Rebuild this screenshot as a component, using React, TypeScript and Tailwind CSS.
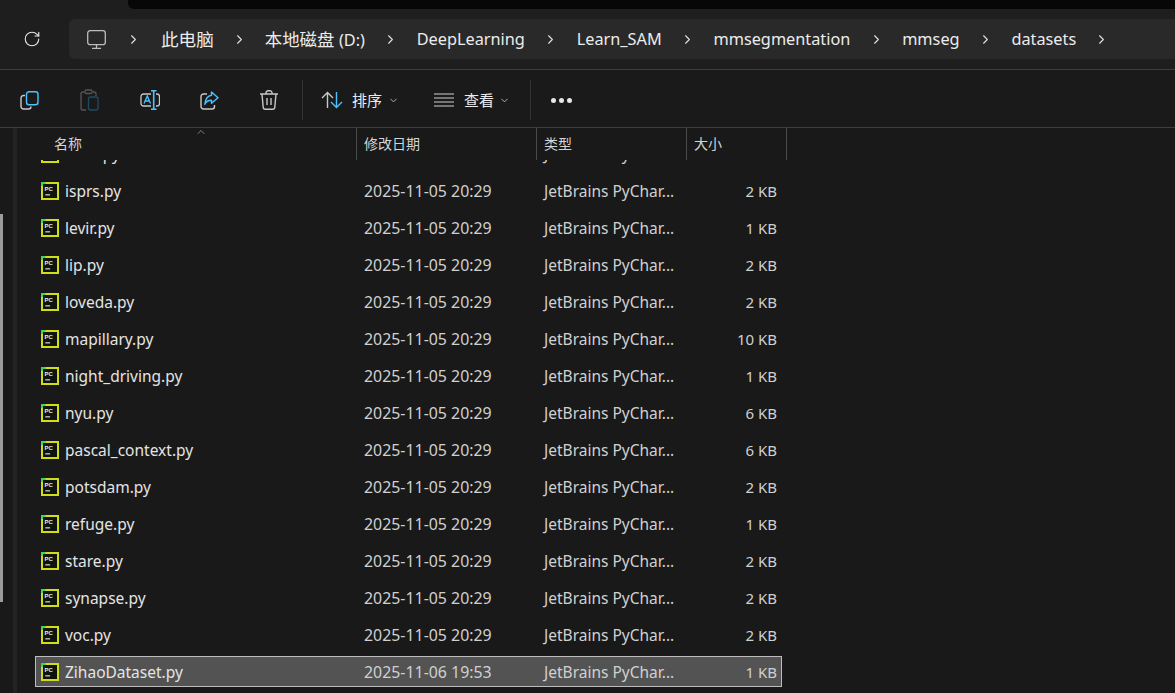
import React from "react";
import { RotateCw, ChevronRight, ChevronDown, ChevronUp } from "lucide-react";

const FONT = "[font-family:'Noto_Sans','Noto_Sans_CJK_SC',sans-serif]";

const files: [string, string, string][] = [
  ["isaid.py", "2025-11-05 20:29", "2 KB"],
  ["isprs.py", "2025-11-05 20:29", "2 KB"],
  ["levir.py", "2025-11-05 20:29", "1 KB"],
  ["lip.py", "2025-11-05 20:29", "2 KB"],
  ["loveda.py", "2025-11-05 20:29", "2 KB"],
  ["mapillary.py", "2025-11-05 20:29", "10 KB"],
  ["night_driving.py", "2025-11-05 20:29", "1 KB"],
  ["nyu.py", "2025-11-05 20:29", "6 KB"],
  ["pascal_context.py", "2025-11-05 20:29", "6 KB"],
  ["potsdam.py", "2025-11-05 20:29", "2 KB"],
  ["refuge.py", "2025-11-05 20:29", "1 KB"],
  ["stare.py", "2025-11-05 20:29", "2 KB"],
  ["synapse.py", "2025-11-05 20:29", "2 KB"],
  ["voc.py", "2025-11-05 20:29", "2 KB"],
  ["ZihaoDataset.py", "2025-11-06 19:53", "1 KB"],
];

const crumbs = ["DeepLearning", "Learn_SAM", "mmsegmentation", "mmseg", "datasets"];

function Sep({ className = "" }: { className?: string }) {
  return <ChevronRight size={15} strokeWidth={1.8} className={`shrink-0 text-[#e0e0e0] ${className}`} />;
}

function PcIcon() {
  return (
    <svg width="18" height="18" viewBox="0 0 18 18" className="-mt-[2px] shrink-0">
      <rect x="0" y="0" width="18" height="18" fill="#d2dc18" />
      <rect x="0" y="0" width="4.500" height="4" fill="#3ed45f" />
      <rect x="2" y="2" width="14" height="14" fill="#0e140e" />
      <text x="3.600" y="8.800" fontSize="6" fontWeight="700" fill="#e6efe6" fontFamily="'Liberation Sans',sans-serif">PC</text>
      <rect x="4.300" y="12.300" width="4.800" height="1.100" fill="#e8e8e8" />
    </svg>
  );
}

function MonitorIcon() {
  return (
    <svg width="19" height="19" viewBox="0 0 19 19" fill="none" stroke="#bdbdbd" strokeWidth="1.300" className="shrink-0">
      <rect x="0.700" y="0.700" width="17.600" height="14" rx="2.500" />
      <path d="M9.500 14.700v3.600M5 18.300h9" />
    </svg>
  );
}
function CopyIcon() {
  return (
    <svg width="19" height="19" viewBox="0 0 19 19" fill="none" strokeWidth="1.400" className="shrink-0">
      <path d="M5 4.500H3.500A2.500 2.500 0 0 0 1 7v8.500A2.500 2.500 0 0 0 3.500 18h5a2.500 2.500 0 0 0 2.500-2.500" stroke="#c8c8c8" />
      <rect x="6.500" y="0.700" width="11.500" height="13" rx="2.500" stroke="#4cc2ff" />
    </svg>
  );
}
function PasteIcon() {
  return (
    <svg width="19" height="22" viewBox="0 0 19 22" fill="none" strokeWidth="1.300" className="shrink-0">
      <path d="M4.500 3H3A2 2 0 0 0 1 5v14a2 2 0 0 0 2 2h3" stroke="#555" />
      <path d="M12.500 3H14a2 2 0 0 1 2 2v2" stroke="#555" />
      <rect x="5" y="1" width="7" height="3.500" rx="1.200" stroke="#555" />
      <rect x="8.500" y="8" width="9.500" height="13" rx="2" stroke="#1f4c63" />
    </svg>
  );
}
function RenameIcon() {
  return (
    <svg width="20" height="20" viewBox="0 0 20 20" fill="none" strokeWidth="1.300" className="shrink-0">
      <path d="M11 4H3.500A2.500 2.500 0 0 0 1 6.500v7A2.500 2.500 0 0 0 3.500 16H11" stroke="#c8c8c8" />
      <path d="M16 4h1A2.500 2.500 0 0 1 19.500 6.500v7A2.500 2.500 0 0 1 17 16h-1" stroke="#c8c8c8" />
      <path d="M4 13.500 7.300 6l3.200 7.500M5.200 11h4.200" stroke="#4cc2ff" />
      <path d="M11 .700h5.500M11 19.300h5.500M13.700 .700v18.600" stroke="#4cc2ff" strokeWidth="1.600" />
    </svg>
  );
}
function ShareIcon() {
  return (
    <svg width="19" height="19" viewBox="0 0 19 19" fill="none" strokeWidth="1.400" className="shrink-0">
      <path d="M7 3H3.500A2.500 2.500 0 0 0 1 5.500v10A2.500 2.500 0 0 0 3.500 18H12a2.500 2.500 0 0 0 2.500-2.500V14" stroke="#c8c8c8" />
      <path d="M11.500 1 18 6.700l-6.500 5.600V9.300C8 9.300 6 10.800 4.800 13.300 5.300 8.800 7.500 4.700 11.500 4.200Z" stroke="#4cc2ff" strokeLinejoin="round" />
    </svg>
  );
}
function TrashIcon() {
  return (
    <svg width="18" height="20" viewBox="0 0 18 20" fill="none" stroke="#c8c8c8" strokeWidth="1.400" className="shrink-0">
      <path d="M0 4h18M6 4V2.800A2 2 0 0 1 8 .800h2a2 2 0 0 1 2 2V4" />
      <path d="M2 4l1.200 13.300a2 2 0 0 0 2 1.900h7.600a2 2 0 0 0 2-1.900L16 4" />
      <path d="M7 8v7M11 8v7" />
    </svg>
  );
}
function SortIcon() {
  return (
    <svg width="22" height="18" viewBox="0 0 22 18" fill="none" strokeWidth="1.400" className="shrink-0">
      <path d="M6.500 17V1.500M1 7l5.500-5.500L12 7" stroke="#c8c8c8" />
      <path d="M15.500 1v15.500M10 11l5.500 5.500L21 11" stroke="#4cc2ff" />
    </svg>
  );
}
function ViewIcon() {
  return (
    <svg width="20" height="14" viewBox="0 0 20 14" fill="none" stroke="#d0d0d0" strokeWidth="1.100" className="shrink-0">
      <path d="M0 1h20M0 5h20M0 9h20M0 13h20" />
    </svg>
  );
}

function Row({ f, selected }: { f: [string, string, string]; selected?: boolean }) {
  return (
    <div className="relative flex h-[37px] shrink-0 items-center text-[#e4e4e4]">
      {selected && <div className="absolute left-[35px] top-[2px] h-[31px] w-[747px] border border-[#bdbdbd] bg-[#535353]" />}
      <div className="relative flex w-[356px] items-center gap-[6px] pl-[41px] text-[15.500px]">
        <PcIcon />
        <span>{f[0]}</span>
      </div>
      <div className="relative w-[180px] pl-[8px] text-[15.900px] text-[#d0d0d0]">{f[1]}</div>
      <div className="relative w-[150px] pl-[8px] text-[15.500px] text-[#d0d0d0]">JetBrains PyChar...</div>
      <div className="relative w-[91px] text-right text-[15px] text-[#d0d0d0]">{f[2]}</div>
    </div>
  );
}

function HeaderCell({ label, className }: { label: string; className: string }) {
  return (
    <div className={`flex h-[32px] items-center border-r border-[#4a4a4a] pb-[2px] text-[14px] text-[#d4d4d4] ${className}`}>
      {label}
    </div>
  );
}

export default function App() {
  return (
    <div className={`flex h-[693px] w-[1175px] flex-col overflow-hidden bg-[#191919] ${FONT}`}>
      {/* title & address bar */}
      <div className="h-[70px] shrink-0 border-b border-[#3d3d3d] bg-[#1e1e1e]">
        <div className="ml-[128px] h-[9px] rounded-bl-[6px] bg-[#070707]" />
        <div className="mt-[10px] flex items-center">
          <div className="flex w-[63px] shrink-0 justify-center">
            <RotateCw size={18} strokeWidth={1.500} className="text-[#e8e8e8]" />
          </div>
          <div className="ml-[6px] flex h-[40px] flex-1 items-center rounded-l-[6px] bg-[#292929] pl-[18px] text-[16.300px] text-[#ececec]">
            <MonitorIcon />
            <Sep className="ml-[20px]" />
            <span className="ml-[20px] text-[17.600px]">此电脑</span>
            <Sep className="mx-[18px]" />
            <span className="text-[17.400px]">本地磁盘 <span className="text-[16.300px]">(D:)</span></span>
            {crumbs.map((c) => (
              <React.Fragment key={c}>
                <Sep className="mx-[18.400px]" />
                <span>{c}</span>
              </React.Fragment>
            ))}
            <Sep className="ml-[18px]" />
          </div>
        </div>
      </div>

      {/* command bar */}
      <div className="flex h-[58px] shrink-0 items-center border-b border-[#3d3d3d] bg-[#1a1a1a] pl-[20px] pt-[3px]">
        <div className="flex w-[282px] items-center">
          <CopyIcon />
          <span className="ml-[41px]"><PasteIcon /></span>
          <span className="ml-[41px]"><RenameIcon /></span>
          <span className="ml-[40px]"><ShareIcon /></span>
          <span className="ml-[41px]"><TrashIcon /></span>
        </div>
        <div className="h-[40px] w-px bg-[#333]" />
        <div className="ml-[18px] flex items-center text-[15px] text-[#ececec]">
          <SortIcon />
          <span className="ml-[9px]">排序</span>
          <ChevronDown size={11} className="ml-[6px] text-[#bbb]" />
          <span className="ml-[35px]"><ViewIcon /></span>
          <span className="ml-[10px]">查看</span>
          <ChevronDown size={11} className="ml-[5px] text-[#bbb]" />
        </div>
        <div className="ml-[20px] h-[40px] w-px bg-[#333]" />
        <div className="ml-[20px] flex gap-[3px]">
          <span className="size-[5px] rounded-full bg-[#e8e8e8]" />
          <span className="size-[5px] rounded-full bg-[#e8e8e8]" />
          <span className="size-[5px] rounded-full bg-[#e8e8e8]" />
        </div>
      </div>

      {/* content */}
      <div className="flex min-h-0 flex-1">
        <div className="flex w-[17px] shrink-0">
          <div className="mt-[86px] h-[388px] w-[3px] bg-[#9c9c9c]" />
          <div className="ml-[10px] w-[4px] bg-[#232323]" />
        </div>
        <div className="relative -ml-[17px] min-w-0 flex-1">
          <div className="flex h-[32px] pl-[54px]">
            <HeaderCell label="名称" className="w-[303px]" />
            <HeaderCell label="修改日期" className="w-[180px] pl-[7px]" />
            <HeaderCell label="类型" className="w-[150px] pl-[7px]" />
            <HeaderCell label="大小" className="w-[100px] pl-[7px]" />
          </div>
          <ChevronUp size={12} strokeWidth={1.400} className="absolute -top-[2px] left-[195px] text-[#aaa]" />
          <div className="h-[533px] overflow-hidden">
            <div className="-mt-[24px] flex flex-col">
              {files.map((f, i) => (
                <Row key={f[0]} f={f} selected={i === files.length - 1} />
              ))}
            </div>
          </div>
        </div>
      </div>
    </div>
  );
}
